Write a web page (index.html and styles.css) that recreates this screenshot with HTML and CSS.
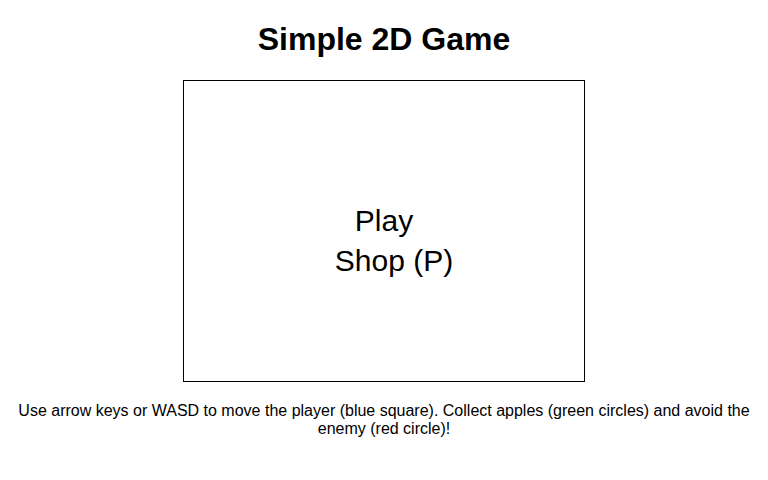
FILE: index.html
```html
<!DOCTYPE html>
<html lang="en">
<head>
  <meta charset="UTF-8" />
  <meta name="viewport" content="width=device-width, initial-scale=1.0"/>
  <title>Simple 2D Game</title>
  <link rel="stylesheet" href="styles.css">
</head>
<body>

<h1>Simple 2D Game</h1>

<div class="game-board" id="gameBoard">
  <div class="menu">
    <span class="menu-item">Play</span>
    <span class="menu-item shop">Shop (P)</span>
  </div>
</div>

<p class="instructions">Use arrow keys or WASD to move the player (blue square). Collect apples (green circles) and avoid the enemy (red circle)!</p>

</body>
</html>
```

FILE: styles.css
```css
body {
  margin: 0 8px;
  font-family: 'Liberation Sans', Arial, sans-serif;
  text-align: center;
  background: #fff;
  color: #000;
}

h1 {
  font-size: 32px;
  margin: 21.44px 0;
}

.game-board {
  display: inline-block;
  vertical-align: baseline;
  overflow: hidden;
  width: 400px;
  height: 300px;
  border: 1px solid #000;
  background: #fff;
}

.menu {
  display: flex;
  flex-direction: column;
  align-items: center;
  padding-top: 120px;
  font-size: 30px;
  line-height: 40px;
}

.menu-item.shop {
  margin-left: 20px;
}

.instructions {
  font-size: 16px;
  margin: 16px 0;
}
```
